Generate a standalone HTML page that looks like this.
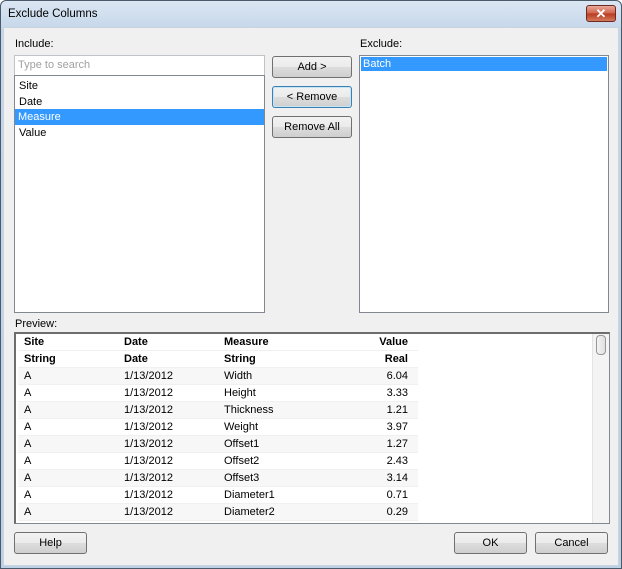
<!DOCTYPE html>
<html><head><style>
*{box-sizing:border-box;margin:0;padding:0}
body{width:622px;height:569px;overflow:hidden;font-family:"Liberation Sans",sans-serif;font-size:11px;color:#000;background:#fff}
.win{position:absolute;left:0;top:0;width:622px;height:569px;border:1px solid #4a5a6a;border-radius:6px 6px 0 0;background:linear-gradient(#dbe6f2,#c4d6ea 30px,#bcd0e6)}
.title{position:absolute;left:7px;top:7px;font-size:11.5px;color:#000}
.close{position:absolute;left:585px;top:4px;width:30px;height:17px;border:1px solid #6e2a20;border-radius:3px;background:linear-gradient(#e9a99a,#d0614a 50%,#b8391e 51%,#d47a5c);color:#fff;font-weight:bold;font-size:13px;text-align:center;line-height:15px}
.client{position:absolute;left:3px;top:27px;width:616px;height:539px;background:#f0f0f0;border:1px solid #c8d4e0}
.a{position:absolute}
.box{position:absolute;background:#fff;border:1px solid #abadb3}
.item{position:absolute;left:2px;height:16px;line-height:16px;padding-left:2px;font-size:11px}
.sel{background:#3399ff;color:#fff}
.btn{position:absolute;border:1px solid #707070;border-radius:3px;background:linear-gradient(#f2f2f2,#ebebeb 50%,#dddddd 51%,#cfcfcf);text-align:center;font-size:11px}
.foc{border-color:#3c7fb1;box-shadow:inset 0 0 0 1px #c4e5f6}
.grid{position:absolute;left:14px;top:332px;width:596px;height:192px;background:#fff;border:1px solid #828790;border-top:2px solid #6d6d6d;border-left:2px solid #6d6d6d}
.row{position:absolute;left:2px;width:400px;height:17px;line-height:17px;border-bottom:1px solid #f0f0f0}
.row span{position:absolute;top:0}
.c1{left:6px}.c2{left:106px}.c3{left:206px}.c4{left:300px;width:90px;text-align:right}
.h span{font-weight:bold}
</style></head><body>
<div class="win">
<div class="title">Exclude Columns</div>
<div class="close">✕</div>
</div>
<div class="client"></div>
<div class="a" style="left:15px;top:38px">Include:</div>
<div class="a" style="left:360px;top:38px">Exclude:</div>
<div class="box" style="left:14px;top:55px;width:251px;height:21px;border-color:#c0c4c8"><span style="position:absolute;left:3px;top:3px;color:#a0a0a0">Type to search</span></div>
<div class="box" style="left:14px;top:75px;width:251px;height:238px;border-color:#828790">
<div class="item" style="top:2px">Site</div>
<div class="item" style="top:18px">Date</div>
<div class="item sel" style="top:33px;width:249px;left:0;padding-left:3px">Measure</div>
<div class="item" style="top:49px">Value</div>
</div>
<div class="box" style="left:359px;top:55px;width:250px;height:258px;border-color:#828790">
<div class="item sel" style="top:1px;left:1px;width:246px;height:14px;line-height:14px">Batch</div>
</div>
<div class="btn" style="left:272px;top:56px;width:80px;height:22px;line-height:20px">Add &gt;</div>
<div class="btn foc" style="left:272px;top:86px;width:80px;height:22px;line-height:20px">&lt; Remove</div>
<div class="btn" style="left:272px;top:116px;width:80px;height:22px;line-height:20px">Remove All</div>
<div class="a" style="left:15px;top:318px">Preview:</div>
<div class="grid">
<div class="row h" style="top:0"><span class="c1">Site</span><span class="c2">Date</span><span class="c3">Measure</span><span class="c4">Value</span></div>
<div class="row h" style="top:17px"><span class="c1">String</span><span class="c2">Date</span><span class="c3">String</span><span class="c4">Real</span></div>
<div class="row" style="top:34px;background:#f7f7f7"><span class="c1">A</span><span class="c2">1/13/2012</span><span class="c3">Width</span><span class="c4">6.04</span></div>
<div class="row" style="top:51px"><span class="c1">A</span><span class="c2">1/13/2012</span><span class="c3">Height</span><span class="c4">3.33</span></div>
<div class="row" style="top:68px;background:#f7f7f7"><span class="c1">A</span><span class="c2">1/13/2012</span><span class="c3">Thickness</span><span class="c4">1.21</span></div>
<div class="row" style="top:85px"><span class="c1">A</span><span class="c2">1/13/2012</span><span class="c3">Weight</span><span class="c4">3.97</span></div>
<div class="row" style="top:102px;background:#f7f7f7"><span class="c1">A</span><span class="c2">1/13/2012</span><span class="c3">Offset1</span><span class="c4">1.27</span></div>
<div class="row" style="top:119px"><span class="c1">A</span><span class="c2">1/13/2012</span><span class="c3">Offset2</span><span class="c4">2.43</span></div>
<div class="row" style="top:136px;background:#f7f7f7"><span class="c1">A</span><span class="c2">1/13/2012</span><span class="c3">Offset3</span><span class="c4">3.14</span></div>
<div class="row" style="top:153px"><span class="c1">A</span><span class="c2">1/13/2012</span><span class="c3">Diameter1</span><span class="c4">0.71</span></div>
<div class="row" style="top:170px;background:#f7f7f7"><span class="c1">A</span><span class="c2">1/13/2012</span><span class="c3">Diameter2</span><span class="c4">0.29</span></div>
<div style="position:absolute;left:576px;top:0;width:17px;height:189px;background:#f4f4f4;border-left:1px solid #e4e4e4"><div style="position:absolute;left:3px;top:1px;width:10px;height:20px;border:1px solid #979797;border-radius:4px;background:linear-gradient(90deg,#f3f3f3,#e0e0e0)"></div></div>
</div>
<div class="btn" style="left:14px;top:532px;width:73px;height:22px;line-height:20px">Help</div>
<div class="btn" style="left:454px;top:532px;width:73px;height:22px;line-height:20px">OK</div>
<div class="btn" style="left:535px;top:532px;width:73px;height:22px;line-height:20px">Cancel</div>
</body></html>
